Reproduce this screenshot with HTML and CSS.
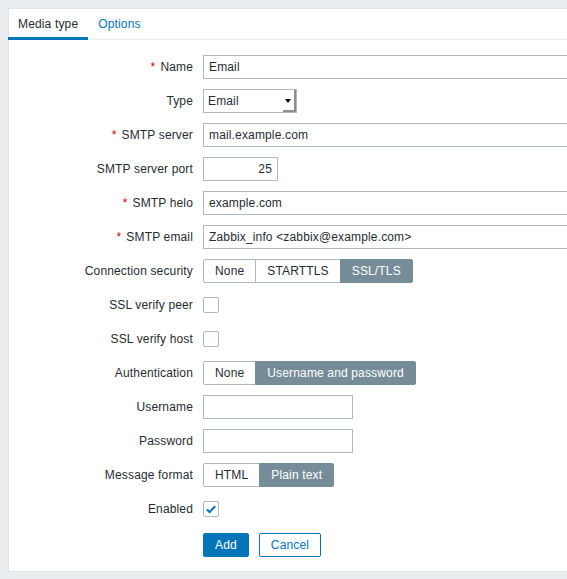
FILE: index.html
```html
<!DOCTYPE html>
<html>
<head>
<meta charset="utf-8">
<link rel="stylesheet" href="styles.css">
</head>
<body>
<div class="panel">
  <ul class="tabs">
    <li class="tab active">Media type</li>
    <li class="tab"><a href="#">Options</a></li>
  </ul>
  <div class="form">
    <label class="lbl"><span class="req">*</span>Name</label>
    <div class="field"><div class="input wide">Email</div></div>

    <label class="lbl">Type</label>
    <div class="field">
      <div class="select"><span class="sel-text">Email</span><span class="sel-btn"><span class="tri"></span></span></div>
    </div>

    <label class="lbl"><span class="req">*</span>SMTP server</label>
    <div class="field"><div class="input wide">mail.example.com</div></div>

    <label class="lbl">SMTP server port</label>
    <div class="field"><div class="input port">25</div></div>

    <label class="lbl"><span class="req">*</span>SMTP helo</label>
    <div class="field"><div class="input wide">example.com</div></div>

    <label class="lbl"><span class="req">*</span>SMTP email</label>
    <div class="field"><div class="input wide">Zabbix_info &lt;zabbix@example.com&gt;</div></div>

    <label class="lbl">Connection security</label>
    <div class="field">
      <div class="seg"><span class="seg-item">None</span><span class="seg-item">STARTTLS</span><span class="seg-item on">SSL/TLS</span></div>
    </div>

    <label class="lbl">SSL verify peer</label>
    <div class="field"><span class="check"></span></div>

    <label class="lbl">SSL verify host</label>
    <div class="field"><span class="check"></span></div>

    <label class="lbl">Authentication</label>
    <div class="field">
      <div class="seg"><span class="seg-item">None</span><span class="seg-item on">Username and password</span></div>
    </div>

    <label class="lbl">Username</label>
    <div class="field"><div class="input mid"></div></div>

    <label class="lbl">Password</label>
    <div class="field"><div class="input mid"></div></div>

    <label class="lbl">Message format</label>
    <div class="field">
      <div class="seg"><span class="seg-item">HTML</span><span class="seg-item on">Plain text</span></div>
    </div>

    <label class="lbl">Enabled</label>
    <div class="field"><span class="check"><svg width="14" height="14" viewBox="0 0 14 14"><polyline points="2.8,7.4 5.6,10 11.2,4.2" fill="none" stroke="#0275b8" stroke-width="2"/></svg></span></div>

    <span class="lbl"></span>
    <div class="field buttons">
      <button class="btn primary">Add</button>
      <button class="btn alt">Cancel</button>
    </div>
  </div>
</div>
</body>
</html>
```
FILE: styles.css
```css
html, body {
  margin: 0;
  padding: 0;
  overflow: hidden;
}
body {
  background: #ebeef0;
  font-family: "Liberation Sans", Arial, sans-serif;
  font-size: 12px;
  letter-spacing: 0.15px;
  color: #1f2c33;
}
.panel {
  margin: 8px 0 0 8px;
  width: 720px;
  background: #fff;
  border: 1px solid #dfe4e7;
  padding-bottom: 14px;
}
.tabs {
  list-style: none;
  margin: 0;
  padding: 0;
  display: flex;
  height: 30px;
  border-bottom: 1px solid #ebeef0;
}
.tab {
  height: 28px;
  line-height: 30px;
  padding: 0 10px;
  border-bottom: 3px solid transparent;
  margin-bottom: -1px;
}
.tab:first-child {
  margin-left: -1px;
  padding-left: 10px;
}
.tab.active {
  border-bottom-color: #0275b8;
  color: #1f2c33;
}
.tab a {
  color: #0275b8;
  text-decoration: none;
}
.form {
  display: grid;
  grid-template-columns: 184px auto;
  column-gap: 10px;
  row-gap: 10px;
  padding-top: 15px;
  align-items: center;
}
.lbl {
  text-align: right;
  line-height: 24px;
  height: 24px;
  white-space: nowrap;
}
.req {
  color: #d40000;
  margin-right: 5px;
}
.field {
  display: flex;
  align-items: center;
  height: 24px;
}
.input {
  box-sizing: border-box;
  height: 24px;
  line-height: 22px;
  border: 1px solid #acbbc2;
  background: #fff;
  padding: 0 5px;
  white-space: nowrap;
}
.input.wide { width: 453px; }
.input.port { width: 75px; text-align: right; }
.input.mid { width: 150px; }
.select {
  box-sizing: border-box;
  width: 94px;
  height: 24px;
  border: 1px solid #acbbc2;
  display: flex;
  align-items: stretch;
}
.sel-text {
  flex: 1;
  line-height: 22px;
  padding-left: 4px;
}
.sel-btn {
  position: relative;
  width: 11px;
  border-right: 2px solid #8f8f8f;
}
.sel-btn::after {
  content: "";
  position: absolute;
  left: 0;
  right: -2px;
  bottom: 0;
  height: 2px;
  background: #8f8f8f;
}
.tri {
  position: absolute;
  left: 2px;
  top: 9px;
  width: 0;
  height: 0;
  border-left: 3px solid transparent;
  border-right: 3px solid transparent;
  border-top: 4px solid #000;
}
.seg {
  display: flex;
  height: 24px;
}
.seg-item {
  box-sizing: border-box;
  height: 24px;
  line-height: 22px;
  padding: 0 11px;
  border: 1px solid #acbbc2;
  margin-left: -1px;
  background: #fff;
  white-space: nowrap;
}
.seg-item:first-child {
  margin-left: 0;
  border-radius: 2px 0 0 2px;
}
.seg-item:last-child {
  border-radius: 0 2px 2px 0;
}
.seg-item.on {
  background: #768d99;
  border-color: #768d99;
  color: #fff;
}
.check {
  box-sizing: border-box;
  width: 16px;
  height: 16px;
  border: 1px solid #acbbc2;
  border-radius: 2px;
  background: #fff;
  display: flex;
  align-items: center;
  justify-content: center;
}
.buttons {
  gap: 10px;
  padding-top: 2px;
}
.btn {
  box-sizing: border-box;
  height: 24px;
  font-family: "Liberation Sans", Arial, sans-serif;
  font-size: 12px;
  letter-spacing: 0.15px;
  padding: 0 11px;
  border: 1px solid #0275b8;
  border-radius: 2px;
  cursor: pointer;
}
.btn.primary {
  background: #0275b8;
  color: #fff;
}
.btn.alt {
  background: #fff;
  color: #0275b8;
}
```
